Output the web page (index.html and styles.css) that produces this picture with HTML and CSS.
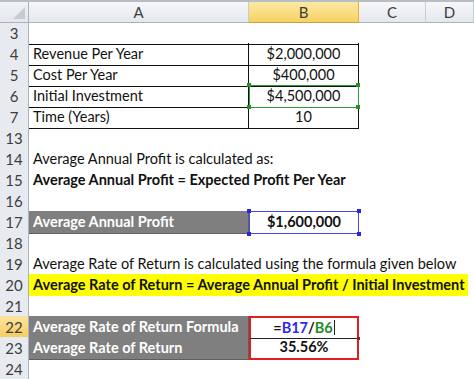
FILE: index.html
```html
<!DOCTYPE html>
<html lang="en">
<head>
    <meta charset="UTF-8">
    <title>Average Rate of Return</title>
    <link rel="stylesheet" href="styles.css">
</head>
<body>
    <div class="sheet">
        <div class="row head">
            <div class="corner"><span class="tri"></span></div>
            <div class="ch">A</div>
            <div class="ch sel">B</div>
            <div class="ch">C</div>
            <div class="ch">D</div>
        </div>

        <div class="row">
            <div class="rh">3</div>
            <div class="c top"></div>
            <div class="c top"></div>
        </div>
        <div class="row">
            <div class="rh">4</div>
            <div class="c tb">Revenue Per Year</div>
            <div class="c tb num">$2,000,000</div>
        </div>
        <div class="row">
            <div class="rh">5</div>
            <div class="c tb">Cost Per Year</div>
            <div class="c tb num">$400,000</div>
        </div>
        <div class="row">
            <div class="rh">6</div>
            <div class="c tb">Initial Investment</div>
            <div class="c tb num ref green">$4,500,000
                <i class="h tl"></i><i class="h tr"></i><i class="h bl"></i><i class="h br"></i>
            </div>
        </div>
        <div class="row">
            <div class="rh">7</div>
            <div class="c tb">Time (Years)</div>
            <div class="c tb num">10</div>
        </div>
        <div class="row">
            <div class="rh">13</div>
        </div>
        <div class="row">
            <div class="rh">14</div>
            <div class="c wide">Average Annual Profit is calculated as:</div>
        </div>
        <div class="row">
            <div class="rh">15</div>
            <div class="c wide bold">Average Annual Profit = Expected Profit Per Year</div>
        </div>
        <div class="row">
            <div class="rh">16</div>
        </div>
        <div class="row">
            <div class="rh">17</div>
            <div class="c dark">Average Annual Profit</div>
            <div class="c num bold ref blue">$1,600,000
                <i class="h tl"></i><i class="h tr"></i><i class="h bl"></i><i class="h br"></i>
            </div>
        </div>
        <div class="row">
            <div class="rh">18</div>
        </div>
        <div class="row">
            <div class="rh">19</div>
            <div class="c wide">Average Rate of Return is calculated using the formula given below</div>
        </div>
        <div class="row">
            <div class="rh">20</div>
            <div class="c wide bold"><span class="mark">Average Rate of Return = Average Annual Profit / Initial Investment</span></div>
        </div>
        <div class="row">
            <div class="rh">21</div>
        </div>
        <div class="row">
            <div class="rh act">22</div>
            <div class="c dark">Average Rate of Return Formula</div>
            <div class="c num bold red-top">=<span class="f-blue">B17</span>/<span class="f-green">B6</span><span class="caret"></span></div>
        </div>
        <div class="row">
            <div class="rh">23</div>
            <div class="c dark">Average Rate of Return</div>
            <div class="c num bold red-bot">35.56%</div>
        </div>
        <div class="row">
            <div class="rh">24</div>
        </div>
    </div>
</body>
</html>
```

FILE: styles.css
```css
body {
    margin: 0;
    background: #fff;
    font-family: Lato, "Liberation Sans", sans-serif;
    font-size: 14.5px;
    color: #111;
}

.sheet {
    width: 474px;
    height: 379px;
    overflow: hidden;
}

.row {
    display: grid;
    grid-template-columns: 29px 220px 110px 67px 1fr;
    height: 21px;
}

/* column headers */
.head {
    height: 22px;
    border-top: 2px solid #b8bec6;
    box-sizing: border-box;
}

.corner {
    position: relative;
    background: linear-gradient(#f1f3f6, #e3e7ec);
    border-right: 1px solid #a9b2bd;
    border-bottom: 1px solid #a9b2bd;
}

.tri {
    position: absolute;
    right: 3px;
    bottom: 3px;
    width: 0;
    height: 0;
    border-left: 12px solid transparent;
    border-bottom: 12px solid #c7ccd2;
}

.ch {
    background: linear-gradient(#f6f7f9, #e4e8ed);
    border-right: 1px solid #c6ccd3;
    border-bottom: 1px solid #a9b2bd;
    text-align: center;
    line-height: 20px;
    font-size: 15px;
    color: #3d3d3d;
}

.ch.sel {
    background: linear-gradient(#fbe9a4, #f7d263);
    border-right-color: #e1b33c;
    border-bottom-color: #c7a040;
}

/* row headers */
.rh {
    box-sizing: border-box;
    background: #e7ebf0;
    border-right: 1px solid #a9b2bd;
    border-bottom: 1px solid #cdd3da;
    text-align: center;
    line-height: 22px;
    font-size: 15px;
    color: #3d3d3d;
}

.rh.act {
    background: linear-gradient(#fbe3a0, #f6cc5e);
    border-bottom-color: #d8aa44;
}

/* cells */
.c {
    box-sizing: border-box;
    padding: 0 4px;
    line-height: 22px;
    white-space: nowrap;
}

.top {
    border-bottom: 1px solid #111;
}

.tb {
    border-right: 1px solid #111;
    border-bottom: 1px solid #111;
}

.num {
    text-align: center;
}

.bold {
    font-weight: bold;
}

.wide {
    grid-column: 2 / -1;
}

.mark {
    display: inline-block;
    background: #ffff00;
    margin-left: -4px;
    padding: 0 3px 0 4px;
}

.dark {
    background: #7f7f7f;
    color: #fff;
    font-weight: bold;
    border-bottom: 1px solid #5f5f5f;
    border-right: 1px solid #5f5f5f;
}

/* formula reference highlights */
.ref {
    position: relative;
}

.green {
    outline: 1px solid #2f9a3a;
    outline-offset: -1px;
}

.blue {
    outline: 1px solid #4848e6;
    outline-offset: -1px;
}

.h {
    position: absolute;
    width: 4px;
    height: 4px;
}

.green .h {
    background: #2a8a33;
}

.blue .h {
    background: #2727e0;
}

.tl { left: -2px; top: -2px; }
.tr { right: -2px; top: -2px; }
.bl { left: -2px; bottom: -2px; }
.br { right: -2px; bottom: -2px; }

.red-top {
    position: relative;
    border: 2px solid #e0201c;
    border-bottom: 1px solid #222;
    line-height: 19px;
}

.red-top::after {
    content: "";
    position: absolute;
    right: -3px;
    bottom: -2px;
    width: 3px;
    height: 3px;
    background: #8a1d1d;
}

.red-bot {
    border: 2px solid #e0201c;
    border-top: none;
    line-height: 20px;
}

.f-blue {
    color: #2b2bf0;
}

.f-green {
    color: #1f8a2a;
}

.caret {
    display: inline-block;
    width: 1px;
    height: 15px;
    background: #222;
    vertical-align: -2px;
    margin-left: 1px;
}
```
